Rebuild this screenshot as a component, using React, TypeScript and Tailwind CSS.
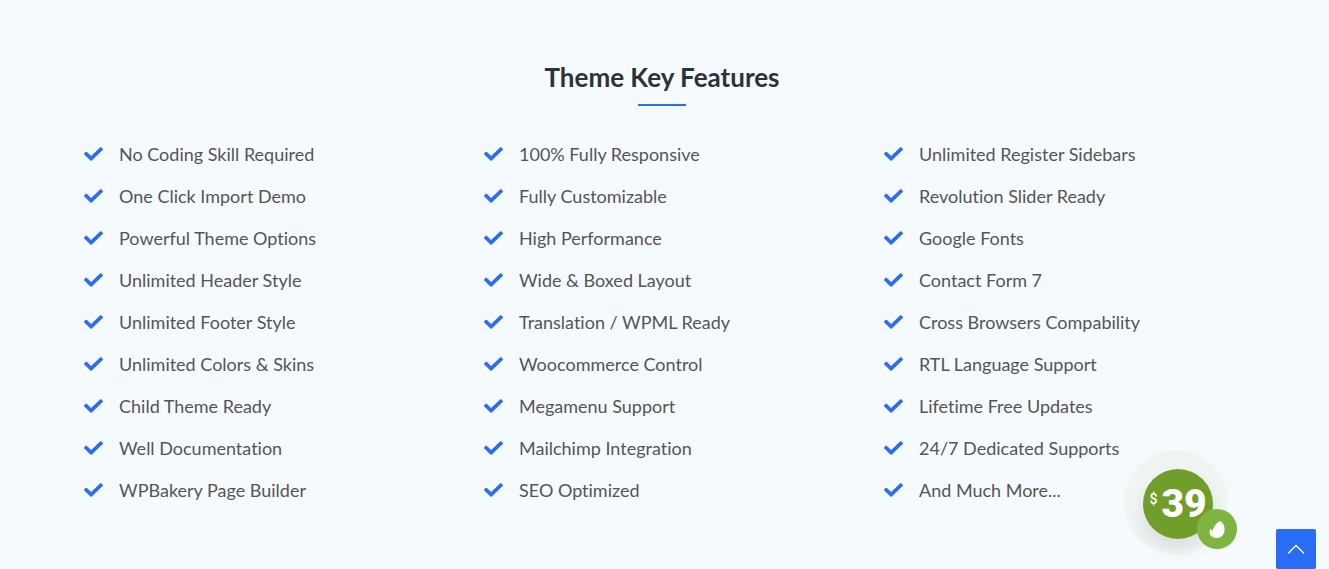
const columns = [
  [
    'No Coding Skill Required',
    'One Click Import Demo',
    'Powerful Theme Options',
    'Unlimited Header Style',
    'Unlimited Footer Style',
    'Unlimited Colors & Skins',
    'Child Theme Ready',
    'Well Documentation',
    'WPBakery Page Builder',
  ],
  [
    '100% Fully Responsive',
    'Fully Customizable',
    'High Performance',
    'Wide & Boxed Layout',
    'Translation / WPML Ready',
    'Woocommerce Control',
    'Megamenu Support',
    'Mailchimp Integration',
    'SEO Optimized',
  ],
  [
    'Unlimited Register Sidebars',
    'Revolution Slider Ready',
    'Google Fonts',
    'Contact Form 7',
    'Cross Browsers Compability',
    'RTL Language Support',
    'Lifetime Free Updates',
    '24/7 Dedicated Supports',
    'And Much More...',
  ],
]

function Check() {
  return (
    <svg viewBox="0 0 512 512" className="h-[18px] w-[19px] shrink-0 fill-[#2a6df4]" preserveAspectRatio="none">
      <path d="M173.9 439.4 7.5 273c-10-10-10-26.200 0-36.200l36.200-36.200c10-10 26.200-10 36.200 0L192 312.700 432.100 72.600c10-10 26.200-10 36.200 0l36.200 36.200c10 10 10 26.200 0 36.200L210.100 439.400c-10 10-26.200 10-36.200 0z" />
    </svg>
  )
}

function PriceBadge() {
  return (
    <div className="absolute left-[1124px] top-[450px] h-[104px] w-[104px] rounded-full bg-[#eff5f3]">
      <div className="absolute left-[19px] top-[19px] flex h-[70px] w-[70px] items-center justify-center rounded-full bg-[#719e2a] text-white shadow-[0_10px_18px_rgba(0,0,0,0.09)]">
        <span className="mb-[10px] mr-[4px] font-['Roboto',sans-serif] text-[14px] font-medium">$</span>
        <span className="font-['Roboto',sans-serif] text-[39px] font-black leading-none">39</span>
      </div>
      <div className="absolute left-[73px] top-[59px] flex h-10 w-10 items-center justify-center rounded-full bg-[#80b440]">
        <svg viewBox="0 0 16 17" className="h-[17px] w-4 fill-white">
          <path d="M11 0C14.500 2 16 5.500 15.500 10 15 14 12 17 8 17 3.500 17 .5 14.500.5 11 .5 9.500 1 8.200 2 7.500 2.200 8.700 2.800 9.500 3.600 9.700 4.500 5.500 7.500 1.800 11 0z" />
        </svg>
      </div>
    </div>
  )
}

export default function App() {
  return (
    <div className="relative h-[569px] overflow-hidden bg-[#f5faff] font-['Lato','Liberation_Sans',sans-serif]">
      <div className="pr-[5px]">
        <h2 className="pt-[59px] text-center text-[26px] font-bold leading-[36px] text-[#2e3138]">Theme Key Features</h2>
        <div className="mx-auto mt-[9px] h-[2px] w-12 bg-[#2a6df4]" />
      </div>
      <div className="mt-[27px] grid grid-cols-[400px_400px_400px] pl-[84px]">
        {columns.map((items, i) => (
          <ul key={i} className="flex flex-col">
            {items.map((item) => (
              <li key={item} className="flex h-[42px] items-center gap-[16px] text-[18px] text-[#555555]">
                <Check />
                <span className="[font-variant-ligatures:none]">{item}</span>
              </li>
            ))}
          </ul>
        ))}
      </div>
      <PriceBadge />
      <div className="absolute left-[1276px] top-[529px] flex h-10 w-10 items-center justify-center rounded-[2px] bg-[#2a6df4]">
        <svg viewBox="0 0 18 10" className="h-[10px] w-[18px] fill-none stroke-white stroke-[1.3]">
          <path d="M1 9.500 9 1.500l8 8" />
        </svg>
      </div>
    </div>
  )
}
